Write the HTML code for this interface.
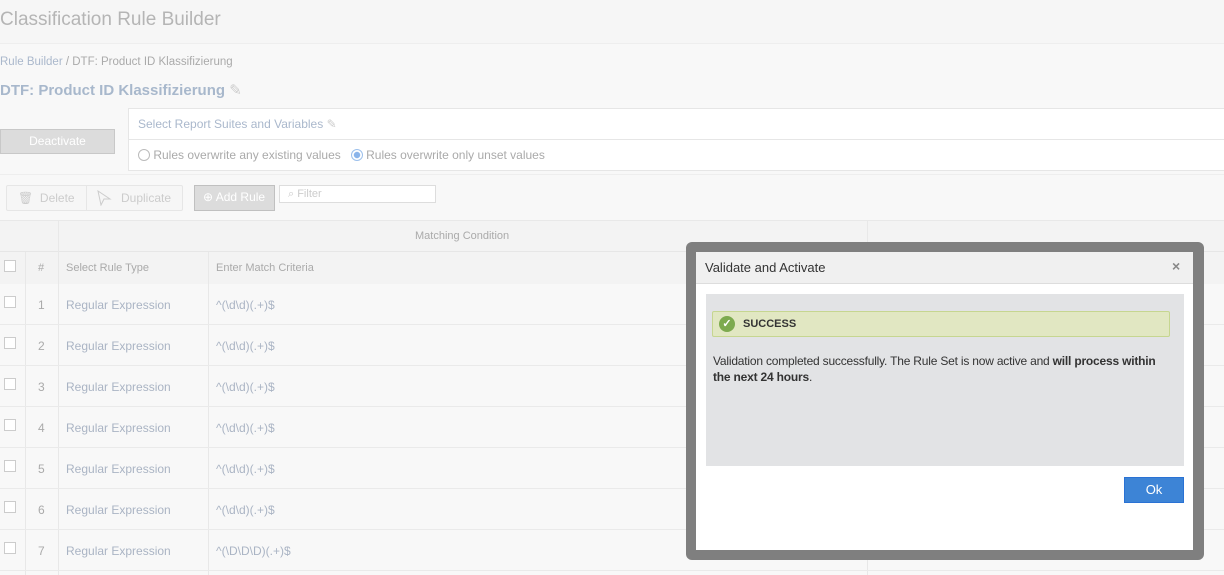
<!DOCTYPE html>
<html><head><style>
*{box-sizing:border-box;margin:0;padding:0}
body{width:1224px;height:575px;overflow:hidden;background:#f8f8f8;font-family:"Liberation Sans",sans-serif;position:relative;color:#aaa}
.a{position:absolute}
.t{font-size:12px;color:#aab4c4}
</style></head><body>
<div class="a" style="left:0;top:0;width:1224px;height:44px;background:#f6f6f6;border-bottom:1px solid #eee"></div>
<div class="a" style="left:0;top:9px;font-size:19px;color:#b5b5b5">Classification Rule Builder</div>
<div class="a" style="left:0;top:56px;font-size:11.5px;color:#aaa"><span style="color:#aab8cc">Rule Builder</span> / DTF: Product ID Klassifizierung</div>
<div class="a" style="left:0;top:81px;font-size:15px;font-weight:bold;color:#a8b8cc">DTF: Product ID Klassifizierung <span style="color:#ccc;font-weight:normal">✎</span></div>
<div class="a" style="left:0;top:129px;width:115px;height:25px;background:#dcdcdc;border:1px solid #c8c8c8;color:#fff;font-size:12px;text-align:center;line-height:23px">Deactivate</div>
<div class="a" style="left:128px;top:108px;width:1100px;height:63px;background:#fff;border:1px solid #e6e6e6"></div>
<div class="a" style="left:128px;top:139px;width:1100px;height:1px;background:#e6e6e6"></div>
<div class="a" style="left:138px;top:117px;font-size:12px;color:#aab8cc">Select Report Suites and Variables <span style="color:#ccc">✎</span></div>
<div class="a" style="left:138px;top:148px;font-size:12px;color:#aaa"><span style="display:inline-block;width:12px;height:12px;border:1px solid #bbb;border-radius:50%;vertical-align:-2px"></span> Rules overwrite any existing values &nbsp;&nbsp;<span style="display:inline-block;width:12px;height:12px;border:1px solid #9cc0ec;border-radius:50%;vertical-align:-2px;background:radial-gradient(#8ab4ea 40%,#fff 50%)"></span> Rules overwrite only unset values</div>
<div class="a" style="left:0;top:174px;width:1224px;height:1px;background:#eee"></div>
<div class="a" style="left:6px;top:185px;width:177px;height:26px;border:1px solid #e6e6e6;border-radius:2px;background:#f6f6f6"></div>
<div class="a" style="left:86px;top:185px;width:1px;height:26px;background:#e6e6e6"></div>
<div class="a" style="left:18px;top:191px;font-size:12px;color:#ccc">🗑 &nbsp;Delete</div>
<svg class="a" style="left:96px;top:190px" width="16" height="16" viewBox="0 0 16 16"><path d="M2 1 L14 9 L8 9 L5 15 Z" fill="none" stroke="#ccc"/></svg>
<div class="a" style="left:121px;top:191px;font-size:12px;color:#ccc">Duplicate</div>
<div class="a" style="left:194px;top:185px;width:81px;height:26px;background:#dcdcdc;border:1px solid #c0c0c0;color:#fff;font-size:12px;line-height:22px;padding-left:8px">⊕ Add Rule</div>
<div class="a" style="left:279px;top:185px;width:157px;height:18px;background:#fff;border:1px solid #ddd;font-size:11px;color:#ccc;padding-left:8px;line-height:16px">⌕ Filter</div>
<div class="a" style="left:0;top:220px;width:1224px;height:64px;background:#f3f3f3;border-top:1px solid #e8e8e8"></div>
<div class="a" style="left:0;top:251px;width:1224px;height:1px;background:#e6e6e6"></div>
<div class="a" style="left:415px;top:230px;font-size:11px;color:#aaa">Matching Condition</div>
<div class="a" style="left:4px;top:260px;width:12px;height:12px;border:1px solid #ccc;background:#fff"></div>
<div class="a" style="left:38px;top:262px;font-size:11px;color:#aaa">#</div>
<div class="a" style="left:66px;top:262px;font-size:11px;color:#aaa">Select Rule Type</div>
<div class="a" style="left:216px;top:262px;font-size:11px;color:#aaa">Enter Match Criteria</div>
<div class="a" style="left:25px;top:252px;width:1px;height:323px;background:#e8e8e8"></div>
<div class="a" style="left:58px;top:220px;width:1px;height:355px;background:#e8e8e8"></div>
<div class="a" style="left:208px;top:252px;width:1px;height:323px;background:#e8e8e8"></div>
<div class="a" style="left:867px;top:220px;width:1px;height:355px;background:#e8e8e8"></div>
<div id="rows"></div>
<script>
var h='';for(var i=0;i<7;i++){var y=284+i*41;h+='<div class="a" style="left:0;top:'+(y+40)+'px;width:1224px;height:1px;background:#eaeaea"></div><div class="a" style="left:4px;top:'+(y+12)+'px;width:12px;height:12px;border:1px solid #ccc;background:#fff"></div><div class="a" style="left:38px;top:'+(y+14)+'px;font-size:12px;color:#aaa">'+(i+1)+'</div><div class="a t" style="left:66px;top:'+(y+14)+'px">Regular Expression</div><div class="a t" style="left:216px;top:'+(y+14)+'px">'+(i==6?'^(\\D\\D\\D)(.+)$':'^(\\d\\d)(.+)$')+'</div>';}
document.getElementById('rows').innerHTML=h;
</script>
<div class="a" style="left:686px;top:242px;width:518px;height:318px;background:#7f7f7f;border-radius:6px"></div>
<div class="a" style="left:696px;top:252px;width:497px;height:298px;background:#fff"></div>
<div class="a" style="left:696px;top:252px;width:497px;height:32px;background:#f0f0f0;border-bottom:1px solid #ddd"></div>
<div class="a" style="left:705px;top:260px;font-size:13px;color:#333">Validate and Activate</div>
<div class="a" style="left:1172px;top:258px;font-size:14px;color:#888;font-weight:bold">×</div>
<div class="a" style="left:706px;top:294px;width:478px;height:172px;background:#e2e3e5"></div>
<div class="a" style="left:712px;top:311px;width:458px;height:26px;background:#e1e7c2;border:1px solid #c6d690;border-radius:2px"></div>
<div class="a" style="left:719px;top:316px;width:16px;height:16px;border-radius:50%;background:#7daa4f;color:#fff;font-size:11px;text-align:center;line-height:16px;font-weight:bold">✓</div>
<div class="a" style="left:743px;top:318px;font-size:11px;font-weight:bold;color:#333">SUCCESS</div>
<div class="a" style="left:713px;top:353px;width:460px;font-size:12px;line-height:16px;color:#333;letter-spacing:-0.2px">Validation completed successfully. The Rule Set is now active and <b>will process within the next 24 hours</b>.</div>
<div class="a" style="left:1124px;top:477px;width:60px;height:26px;background:#3d84d6;border:1px solid #2a72d4;color:#fff;font-size:13px;text-align:center;line-height:24px">Ok</div>
</body></html>
